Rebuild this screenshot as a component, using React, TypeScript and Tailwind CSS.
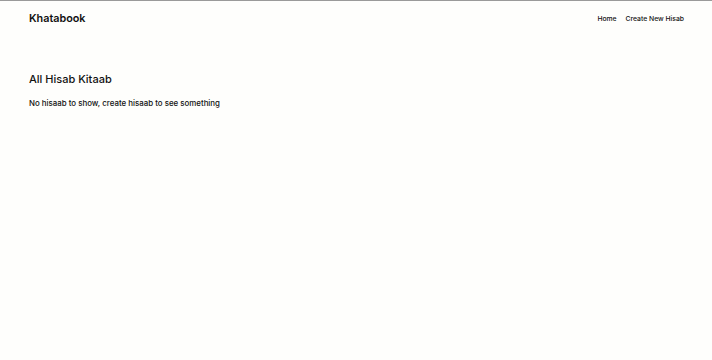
import React from "react";

export default function App() {
  return (
    <div
      className="min-h-[360px] w-full bg-[#fefefc] border-t border-[#9a9a9a] text-[#111]"
      style={{ fontFamily: "Inter, 'Noto Sans', sans-serif" }}
    >
      <nav className="flex items-center justify-between pl-[29px] pr-[28px] h-[36px]">
        <h3 className="text-[10.8px] font-semibold leading-none">Khatabook</h3>
        <div className="flex items-center gap-[9px] text-[6.8px] font-medium leading-none">
          <a>Home</a>
          <a>Create New Hisab</a>
        </div>
      </nav>
      <main className="px-[29px] pt-[37px]">
        <h1 className="text-[11px] font-medium leading-none">All Hisab Kitaab</h1>
        <p className="mt-[15px] text-[7.9px] font-medium leading-none">
          No hisaab to show, create hisaab to see something
        </p>
      </main>
    </div>
  );
}
